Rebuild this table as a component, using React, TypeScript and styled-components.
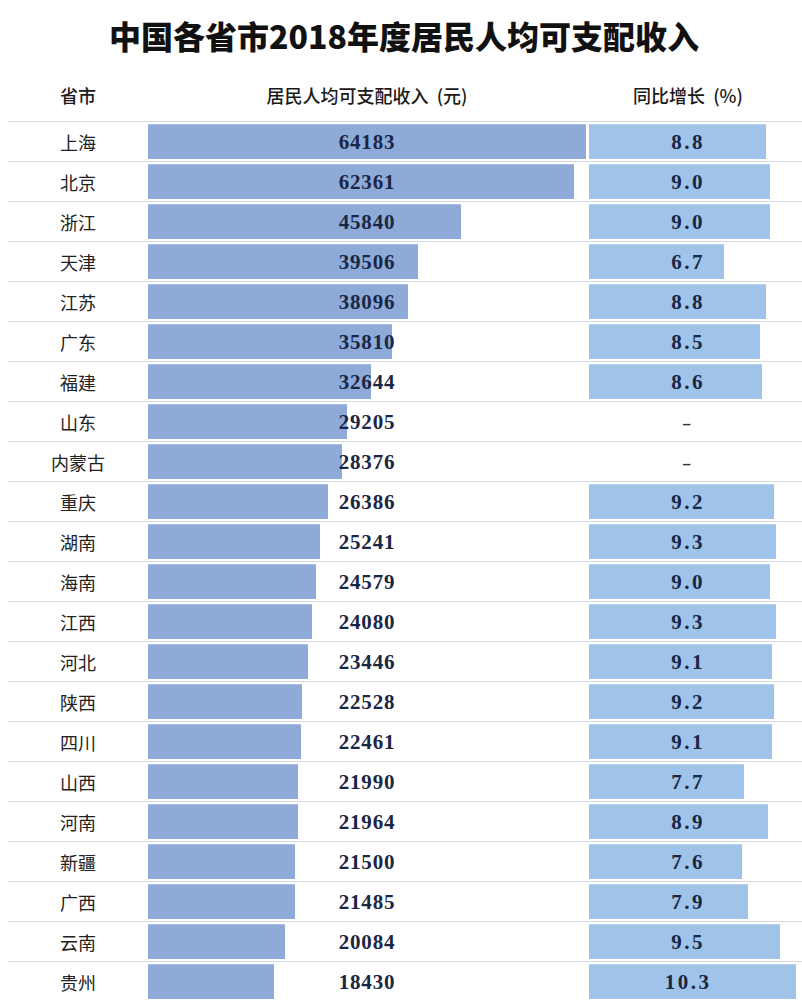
import React from "react";
import styled, { createGlobalStyle } from "styled-components";

const Global = createGlobalStyle`
  html, body { margin: 0; padding: 0; background: #ffffff; }
  body { font-family: "Noto Sans CJK SC", "Noto Sans", sans-serif; }
`;

const INCOME_SCALE = 438 / 64183;
const GROWTH_SCALE = 20.12;

type Row = { name: string; income: number; growth: number | null };

const rows: Row[] = [
  { name: "上海", income: 64183, growth: 8.8 },
  { name: "北京", income: 62361, growth: 9.0 },
  { name: "浙江", income: 45840, growth: 9.0 },
  { name: "天津", income: 39506, growth: 6.7 },
  { name: "江苏", income: 38096, growth: 8.8 },
  { name: "广东", income: 35810, growth: 8.5 },
  { name: "福建", income: 32644, growth: 8.6 },
  { name: "山东", income: 29205, growth: null },
  { name: "内蒙古", income: 28376, growth: null },
  { name: "重庆", income: 26386, growth: 9.2 },
  { name: "湖南", income: 25241, growth: 9.3 },
  { name: "海南", income: 24579, growth: 9.0 },
  { name: "江西", income: 24080, growth: 9.3 },
  { name: "河北", income: 23446, growth: 9.1 },
  { name: "陕西", income: 22528, growth: 9.2 },
  { name: "四川", income: 22461, growth: 9.1 },
  { name: "山西", income: 21990, growth: 7.7 },
  { name: "河南", income: 21964, growth: 8.9 },
  { name: "新疆", income: 21500, growth: 7.6 },
  { name: "广西", income: 21485, growth: 7.9 },
  { name: "云南", income: 20084, growth: 9.5 },
  { name: "贵州", income: 18430, growth: 10.3 },
];

const Page = styled.div`
  width: 802px;
  height: 1006px;
  overflow: hidden;
  background: #ffffff;
`;

const Title = styled.h1`
  margin: 0;
  height: 71px;
  display: flex;
  align-items: center;
  justify-content: center;
  padding-left: 6px;
  padding-bottom: 2px;
  box-sizing: border-box;
  font-family: "Noto Sans CJK SC", sans-serif;
  font-weight: 900;
  font-size: 32px;
  color: #111111;
`;

const Table = styled.div`
  margin-left: 8px;
  width: 794px;
`;

const Grid = styled.div`
  display: grid;
  grid-template-columns: 140px 441px 213px;
`;

const HeaderRow = styled(Grid)`
  height: 50px;
  align-items: center;
`;

const HeadCell = styled.div<{ $w?: number }>`
  font-family: "Noto Sans CJK SC", sans-serif;
  font-weight: 500;
  font-size: 18px;
  color: #1a1a1a;
  text-align: center;
  white-space: pre;
  width: ${(p) => (p.$w ? `${p.$w}px` : "auto")};
  padding-bottom: 2px;
`;

const DataRow = styled(Grid)`
  height: 40px;
  box-sizing: border-box;
  border-top: 1px solid #d6dbe1;
  align-items: center;
`;

const Name = styled.div`
  font-family: "Noto Sans CJK SC", sans-serif;
  font-size: 18px;
  color: #222222;
  text-align: center;
`;

const BarCell = styled.div<{ $w: number }>`
  display: grid;
  grid-template-columns: ${(p) => p.$w}px;
  height: 35px;
  align-items: center;
`;

const Bar = styled.div<{ $tone: "income" | "growth" }>`
  grid-area: 1 / 1;
  height: 35px;
  justify-self: start;
  background: ${(p) => (p.$tone === "income" ? "#8eaad9" : "#9fc3e9")};
  box-shadow: inset 0 1px 0 rgba(255, 255, 255, 0.25);
`;

const Value = styled.div<{ $spacing: number }>`
  grid-area: 1 / 1;
  justify-self: center;
  font-family: "Liberation Serif", "Times New Roman", serif;
  font-weight: 700;
  font-size: 21px;
  letter-spacing: ${(p) => p.$spacing}px;
  color: #1a2744;
  position: relative;
  top: 1px;
`;

const Dash = styled.span`
  font-family: "Liberation Sans", sans-serif;
  font-weight: 700;
  font-size: 15px;
  color: #333333;
`;

export default function App() {
  return (
    <Page>
      <Global />
      <Title>中国各省市2018年度居民人均可支配收入</Title>
      <Table>
        <HeaderRow>
          <HeadCell>省市</HeadCell>
          <HeadCell $w={438}>{"居民人均可支配收入  (元)"}</HeadCell>
          <HeadCell $w={198}>{"同比增长  (%)"}</HeadCell>
        </HeaderRow>
        {rows.map((r) => (
          <DataRow key={r.name}>
            <Name>{r.name}</Name>
            <BarCell $w={438}>
              <Bar $tone="income" style={{ width: r.income * INCOME_SCALE }} />
              <Value $spacing={0.8}>{r.income}</Value>
            </BarCell>
            <BarCell $w={198}>
              {r.growth !== null && (
                <Bar $tone="growth" style={{ width: r.growth * GROWTH_SCALE }} />
              )}
              <Value $spacing={2.5}>
                {r.growth !== null ? r.growth.toFixed(1) : <Dash>–</Dash>}
              </Value>
            </BarCell>
          </DataRow>
        ))}
      </Table>
    </Page>
  );
}
